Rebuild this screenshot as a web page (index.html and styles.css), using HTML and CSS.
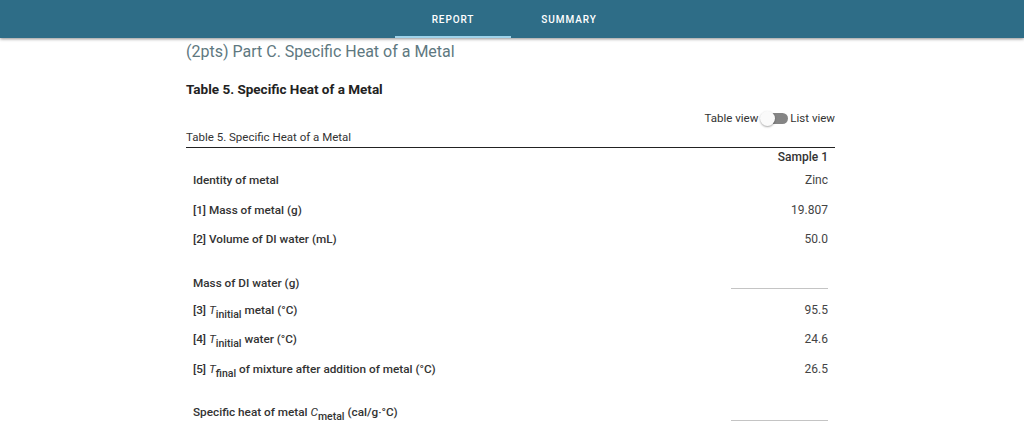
FILE: index.html
```html
<!DOCTYPE html>
<html lang="en">

<head>
    <meta charset="UTF-8">
    <meta name="viewport" content="width=device-width, initial-scale=1.0">
    <title>Report</title>
    <link rel="stylesheet" href="styles.css">
</head>

<body>

    <div class="header">
        <div class="tabs">
            <a class="tab active" href="#">Report</a>
            <a class="tab" href="#">Summary</a>
        </div>
    </div>

    <div class="content">
        <h2 class="part-title">(2pts) Part C. Specific Heat of a Metal</h2>
        <h3 class="table-title">Table 5. Specific Heat of a Metal</h3>

        <div class="view-toggle">
            <span>Table view</span>
            <span class="switch"><span class="knob"></span></span>
            <span>List view</span>
        </div>

        <div class="data-table">
            <div class="caption">Table 5. Specific Heat of a Metal</div>
            <div class="row head">
                <span></span>
                <span class="value">Sample 1</span>
            </div>
            <div class="row">
                <span class="label">Identity of metal</span>
                <span class="value">Zinc</span>
            </div>
            <div class="row">
                <span class="label">[1] Mass of metal (g)</span>
                <span class="value">19.807</span>
            </div>
            <div class="row">
                <span class="label">[2] Volume of DI water (mL)</span>
                <span class="value">50.0</span>
            </div>
            <div class="row tall">
                <span class="label">Mass of DI water (g)</span>
                <input class="answer" type="text">
            </div>
            <div class="row">
                <span class="label">[3] <i>T</i><sub>initial</sub> metal (°C)</span>
                <span class="value">95.5</span>
            </div>
            <div class="row">
                <span class="label">[4] <i>T</i><sub>initial</sub> water (°C)</span>
                <span class="value">24.6</span>
            </div>
            <div class="row">
                <span class="label">[5] <i>T</i><sub>final</sub> of mixture after addition of metal (°C)</span>
                <span class="value">26.5</span>
            </div>
            <div class="row tall">
                <span class="label">Specific heat of metal <i>C</i><sub>metal</sub> (cal/g·°C)</span>
                <input class="answer last" type="text">
            </div>
        </div>
    </div>

</body>

</html>
```

FILE: styles.css
```css
body {
    font-family: Roboto, "Liberation Sans", sans-serif;
    margin: 0;
    padding: 0;
    background-color: #fff;
    color: #333;
}

/* Header and tabs */
.header {
    height: 38px;
    background-color: #2e6d87;
    box-shadow: 0 1px 3px rgba(0, 0, 0, 0.45);
    display: flex;
    justify-content: center;
}

.tabs {
    display: flex;
    margin-left: -2px;
}

.tab {
    width: 116px;
    height: 38px;
    box-sizing: border-box;
    padding-top: 14px;
    text-align: center;
    color: #fff;
    text-decoration: none;
    text-transform: uppercase;
    font-size: 10px;
    font-weight: 500;
    letter-spacing: 0.9px;
}

.tab.active {
    border-bottom: 2px solid #9fd3ea;
    padding-bottom: 1px;
}

/* Content */
.content {
    width: 649px;
    margin-left: calc(50% - 326px);
}

.part-title {
    margin: 3px 0 0;
    font-size: 16px;
    line-height: 22px;
    font-weight: 400;
    color: #5e7880;
}

.table-title {
    margin: 17px 0 0;
    font-size: 13.5px;
    line-height: 18px;
    font-weight: 700;
    color: #222;
}

/* Table / list toggle */
.view-toggle {
    margin-top: 12px;
    display: flex;
    justify-content: flex-end;
    align-items: center;
    font-size: 11.5px;
    line-height: 16px;
    color: #333;
}

.switch {
    position: relative;
    width: 28px;
    height: 11px;
    margin: 0 2px 0 2px;
}

.switch::before {
    content: "";
    position: absolute;
    left: 4px;
    right: 0;
    top: 0;
    height: 11px;
    border-radius: 6px;
    background-color: #858585;
}

.knob {
    position: absolute;
    left: 0;
    top: -2px;
    width: 15px;
    height: 15px;
    border-radius: 50%;
    background-color: #fafafa;
    box-shadow: 0 1px 2px rgba(0, 0, 0, 0.35);
}

/* Data table */
.data-table {
    font-size: 12px;
    line-height: 15px;
}

.caption {
    margin-top: 3px;
    padding-bottom: 2px;
    border-bottom: 1px solid #222;
    font-size: 11.5px;
    line-height: 16px;
    color: #333;
}

.row {
    display: flex;
    justify-content: space-between;
    align-items: center;
    height: 29.5px;
    padding: 0 7px;
}

.row.head {
    height: 18px;
    font-weight: 500;
}

.row.head .value {
    color: #333;
}

.row.tall {
    height: 41px;
    box-sizing: border-box;
    align-items: flex-end;
    padding-bottom: 5px;
}

.label {
    font-size: 11.75px;
    font-weight: 500;
    color: #333;
}

.label i {
    font-weight: 400;
}

.label sub {
    font-size: 10.5px;
    line-height: 0;
    vertical-align: -4px;
}

.value {
    color: #444;
}

.answer {
    width: 97px;
    height: 14px;
    box-sizing: border-box;
    margin: 0 0 2px;
    padding: 0;
    border: none;
    border-bottom: 1px solid #c4c4c4;
    outline: none;
    background: transparent;
}

.answer.last {
    margin-bottom: -1px;
}
```
